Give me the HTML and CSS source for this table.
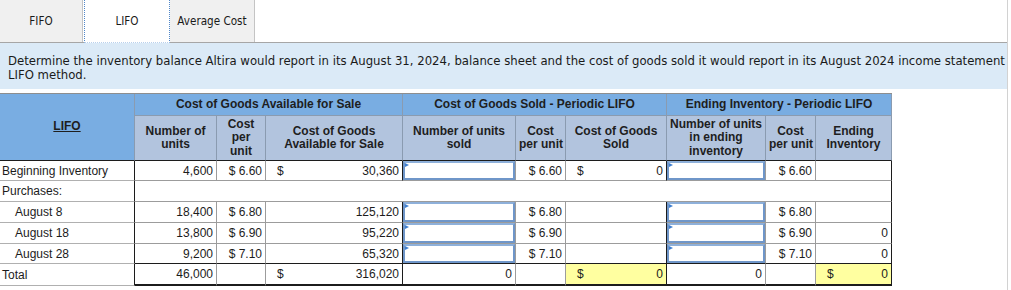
FILE: index.html
```html
<!DOCTYPE html>
<html lang="en">
<head>
<meta charset="utf-8">
<title>LIFO</title>
<link rel="stylesheet" href="styles.css">
</head>
<body>
<div class="frame">
  <div class="tabs">
    <div class="tab">FIFO</div>
    <div class="tab active">LIFO</div>
    <div class="tab">Average Cost</div>
  </div>
  <div class="prompt">
    <p class="line">Determine the inventory balance Altira would report in its August 31, 2024, balance sheet and the cost of goods sold it would report in its August 2024 income statement</p>
    <p class="line">LIFO method.</p>
  </div>
  <table class="sheet">
    <colgroup>
      <col class="w0"><col class="w1"><col class="w2"><col class="w3"><col class="w4"><col class="w5"><col class="w6"><col class="w7"><col class="w8"><col class="w9">
    </colgroup>
    <thead>
      <tr class="group">
        <th rowspan="2" class="corner"><span class="u">LIFO</span></th>
        <th colspan="3">Cost of Goods Available for Sale</th>
        <th colspan="3">Cost of Goods Sold - Periodic LIFO</th>
        <th colspan="3">Ending Inventory - Periodic LIFO</th>
      </tr>
      <tr class="sub">
        <th>Number of<br>units</th>
        <th>Cost<br>per<br>unit</th>
        <th>Cost of Goods<br>Available for Sale</th>
        <th>Number of units<br>sold</th>
        <th>Cost<br>per unit</th>
        <th>Cost of Goods<br>Sold</th>
        <th>Number of units<br>in ending<br>inventory</th>
        <th>Cost<br>per unit</th>
        <th>Ending<br>Inventory</th>
      </tr>
    </thead>
    <tbody>
      <tr class="first">
        <td class="lbl">Beginning Inventory</td>
        <td class="num">4,600</td>
        <td class="num">$ 6.60</td>
        <td class="ge"><div class="money"><span>$</span><span>30,360</span></div></td>
        <td class="in"><div class="field"></div></td>
        <td class="num">$ 6.60</td>
        <td class="ge"><div class="money"><span>$</span><span>0</span></div></td>
        <td class="in"><div class="field"></div></td>
        <td class="num">$ 6.60</td>
        <td class="num ge"></td>
      </tr>
      <tr>
        <td class="lbl">Purchases:</td>
        <td colspan="9" class="ge"></td>
      </tr>
      <tr>
        <td class="lbl indent">August 8</td>
        <td class="num">18,400</td>
        <td class="num">$ 6.80</td>
        <td class="num ge">125,120</td>
        <td class="in"><div class="field"></div></td>
        <td class="num">$ 6.80</td>
        <td class="ge"></td>
        <td class="in"><div class="field"></div></td>
        <td class="num">$ 6.80</td>
        <td class="num ge"></td>
      </tr>
      <tr>
        <td class="lbl indent">August 18</td>
        <td class="num">13,800</td>
        <td class="num">$ 6.90</td>
        <td class="num ge">95,220</td>
        <td class="in"><div class="field"></div></td>
        <td class="num">$ 6.90</td>
        <td class="ge"></td>
        <td class="in"><div class="field"></div></td>
        <td class="num">$ 6.90</td>
        <td class="num ge">0</td>
      </tr>
      <tr class="last">
        <td class="lbl indent">August 28</td>
        <td class="num">9,200</td>
        <td class="num">$ 7.10</td>
        <td class="num ge">65,320</td>
        <td class="in"><div class="field"></div></td>
        <td class="num">$ 7.10</td>
        <td class="ge"></td>
        <td class="in"><div class="field"></div></td>
        <td class="num">$ 7.10</td>
        <td class="num ge">0</td>
      </tr>
      <tr class="total">
        <td class="lbl">Total</td>
        <td class="num">46,000</td>
        <td class="num"></td>
        <td class="ge"><div class="money"><span>$</span><span>316,020</span></div></td>
        <td class="num">0</td>
        <td class="num"></td>
        <td class="ge hl"><div class="money"><span>$</span><span>0</span></div></td>
        <td class="num">0</td>
        <td class="num"></td>
        <td class="ge hl"><div class="money"><span>$</span><span>0</span></div></td>
      </tr>
    </tbody>
  </table>
</div>
</body>
</html>
```

FILE: styles.css
```css
* { box-sizing: border-box; }

body {
  margin: 0;
  background: #ffffff;
  font-family: "Liberation Sans", Arial, sans-serif;
  color: #1c1c1c;
}

.frame {
  width: 1008px;
  height: 290px;
  border-right: 1px solid #d2d2d2;
  overflow: hidden;
}

/* tabs */
.tabs {
  display: flex;
  height: 42px;
  font-family: "DejaVu Sans Condensed", "DejaVu Sans", sans-serif;
  font-size: 11.6px;
  color: #1a1a1a;
}

.tab {
  width: 83px;
  background: #f0f0f0;
  border-right: 1px solid #c4c4c4;
  display: flex;
  align-items: center;
  justify-content: center;
}

.tab.active {
  width: 86px;
  margin-left: 1px;
  background: #ffffff;
  border-left: 1px dotted #4f86c8;
  border-right: 1px dotted #4f86c8;
  border-bottom: 1px dotted #b8d0ec;
  height: 43px;
  position: relative;
  z-index: 1;
}

.tab:last-child {
  width: 85px;
}

/* prompt */
.prompt {
  background: #dbeaf7;
  border-top: 1px solid #a6a6a6;
  padding: 11px 0 6px 8px;
  font-family: "DejaVu Sans Condensed", "DejaVu Sans", sans-serif;
  font-size: 13px;
  line-height: 14px;
  color: #1a1a1a;
  height: 47px;
  overflow: hidden;
}

.line {
  margin: 0;
  white-space: nowrap;
}

/* table */
.sheet {
  margin-top: 4px;
  width: 892px;
  table-layout: fixed;
  border-collapse: separate;
  border-spacing: 0;
  border-top: 1px solid #8e8e8e;
  font-size: 12px;
}

.w0 { width: 135px; }
.w1 { width: 82px; }
.w2 { width: 49px; }
.w3 { width: 137px; }
.w4 { width: 113px; }
.w5 { width: 50px; }
.w6 { width: 101px; }
.w7 { width: 99px; }
.w8 { width: 50px; }
.w9 { width: 76px; }

.sheet th,
.sheet td {
  padding: 0 3px;
  border-right: 1px solid #9c9c9c;
  border-bottom: 1px solid #9c9c9c;
  overflow: hidden;
  white-space: nowrap;
}

.sheet th {
  font-weight: bold;
  color: #1e1e1e;
  text-align: center;
  vertical-align: middle;
  line-height: 13.5px;
}

.group th {
  background: #79ade2;
  height: 22px;
  border-color: #8a9bb0;
}

.group th.corner {
  background: #79ade2;
  border-bottom-color: #1c1c1c;
}

.u {
  text-decoration: underline;
}

.sub th {
  background: #b2c4de;
  height: 45px;
  border-color: #8a9bb0;
  border-bottom-color: #1c1c1c;
}

.sub th:last-child,
.group th:last-child {
  border-right-color: #8a9bb0;
}

.sheet td {
  height: 21px;
  line-height: 14px;
  background: #ffffff;
}

.first td { height: 20px; }
.last td { height: 20px; }

.sheet td.lbl {
  padding-left: 2px;
  border-right-color: #1c1c1c;
  border-bottom-color: #b0b0b0;
}

.sheet td.indent {
  padding-left: 15px;
}

.num {
  text-align: right;
}

.sheet td.ge {
  border-right-color: #1c1c1c;
}

.money {
  display: flex;
  justify-content: space-between;
  padding-left: 8px;
}

.sheet td.in {
  padding: 0;
  position: relative;
}

.field {
  height: 100%;
  min-height: 19px;
  border: 2px solid #6f96c9;
  border-top-color: #8eb0da;
  background: #ffffff;
  position: relative;
}

.field::before {
  content: "";
  position: absolute;
  left: 0;
  top: 0;
  border-left: 4px solid #3f7fd0;
  border-top: 2px solid transparent;
  border-bottom: 2px solid transparent;
}

.last td:not(.lbl) {
  border-bottom-color: #1c1c1c;
}

.total td:not(.lbl) {
  border-bottom: 2px solid #1c1c1c;
  height: 22px;
}

.sheet td.hl {
  background: #ffffa0;
}
```
